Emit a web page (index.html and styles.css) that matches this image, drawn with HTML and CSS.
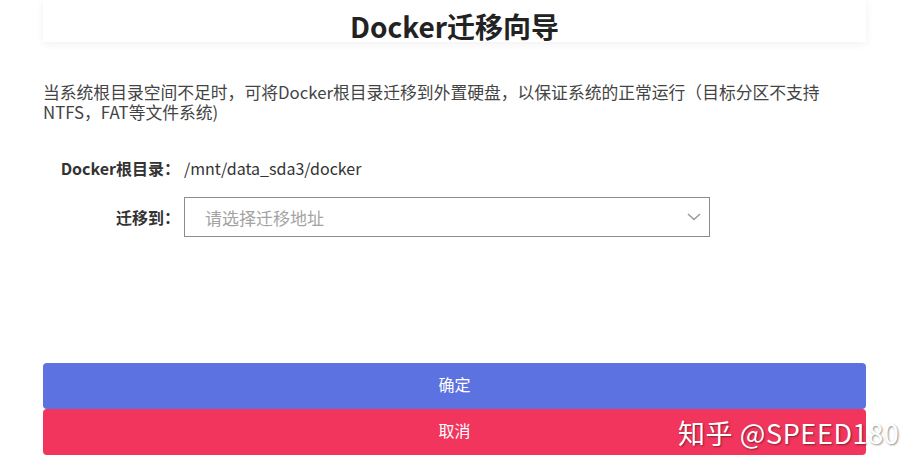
FILE: index.html
```html
<!DOCTYPE html>
<html lang="zh-CN">
<head>
<meta charset="utf-8" />
<title>Docker迁移向导</title>
<link rel="stylesheet" href="styles.css">
</head>
<body>
<div id="page">

<div id="head_bar">
<h1 class="title">Docker迁移向导</h1>
</div>

<p class="tips">当系统根目录空间不足时，可将Docker根目录迁移到外置硬盘，以保证系统的正常运行（目标分区不支持NTFS，FAT等文件系统)</p>

<div class="form_row">
<span class="form_label">Docker根目录：</span>
<span class="form_value">/mnt/data_sda3/docker</span>
</div>

<div class="form_row">
<span class="form_label">迁移到：</span>
<div class="select_box">
<span class="placeholder">请选择迁移地址</span>
<svg class="arrow" width="14" height="8" viewBox="0 0 14 8"><path d="M1 1 L7 6.5 L13 1" fill="none" stroke="#9a9a9a" stroke-width="1.6"/></svg>
</div>
</div>

<div id="btn_group">
<button type="button" class="btn btn_ok">确定</button>
<button type="button" class="btn btn_cancel">取消</button>
</div>

</div><!--page end-->

<div class="watermark">知乎 @SPEED180</div>
</body>
</html>
```

FILE: styles.css
```css
html,body{
	margin:0;
	padding:0;
	background:#fff;
}
body{
	font-family:"Noto Sans CJK SC","Noto Sans",sans-serif;
	color:#333;
}
#page{
	width:823px;
	margin-left:43px;
	height:471px;
	box-sizing:border-box;
	padding-bottom:16px;
	display:flex;
	flex-direction:column;
}
#head_bar{
	height:42px;
	background:#fff;
	box-shadow:0 2px 8px rgba(0,0,0,0.06);
	display:flex;
	align-items:center;
	justify-content:center;
}
.title{
	margin:0;
	font-size:28px;
	font-weight:bold;
	color:#222;
	line-height:1;
	padding-top:10px;
}
.tips{
	margin:40px 0 0 0;
	font-size:16.8px;
	line-height:20px;
	color:#444;
}
.form_row{
	display:flex;
	align-items:center;
	height:40px;
	margin-top:9px;
	font-size:16px;
}
.tips + .form_row{
	margin-top:26px;
}
.form_label{
	width:137px;
	text-align:right;
	font-weight:bold;
	color:#333;
}
.form_value{
	margin-left:4px;
	color:#333;
}
.select_box{
	margin-left:4px;
	width:526px;
	height:40px;
	box-sizing:border-box;
	border:1px solid #8c8c8c;
	display:flex;
	align-items:center;
	justify-content:space-between;
	padding:0 8px 0 20px;
}
.placeholder{
	color:#a3a3a3;
	font-size:17px;
}
#btn_group{
	margin-top:auto;
	display:flex;
	flex-direction:column;
}
.btn{
	height:46px;
	border:none;
	border-radius:4px;
	color:#fff;
	font-family:"Noto Sans CJK SC",sans-serif;
	font-size:16px;
	padding:0 0 4px 0;
}
.btn_ok{
	background:#5c72e0;
}
.btn_cancel{
	background:#f2355d;
}
.watermark{
	position:absolute;
	left:678px;
	top:413px;
	font-size:27px;
	color:#fff;
	font-family:"Noto Sans CJK SC",sans-serif;
	text-shadow:1px 1px 2px rgba(0,0,0,0.45);
	letter-spacing:0.6px;
}
```
